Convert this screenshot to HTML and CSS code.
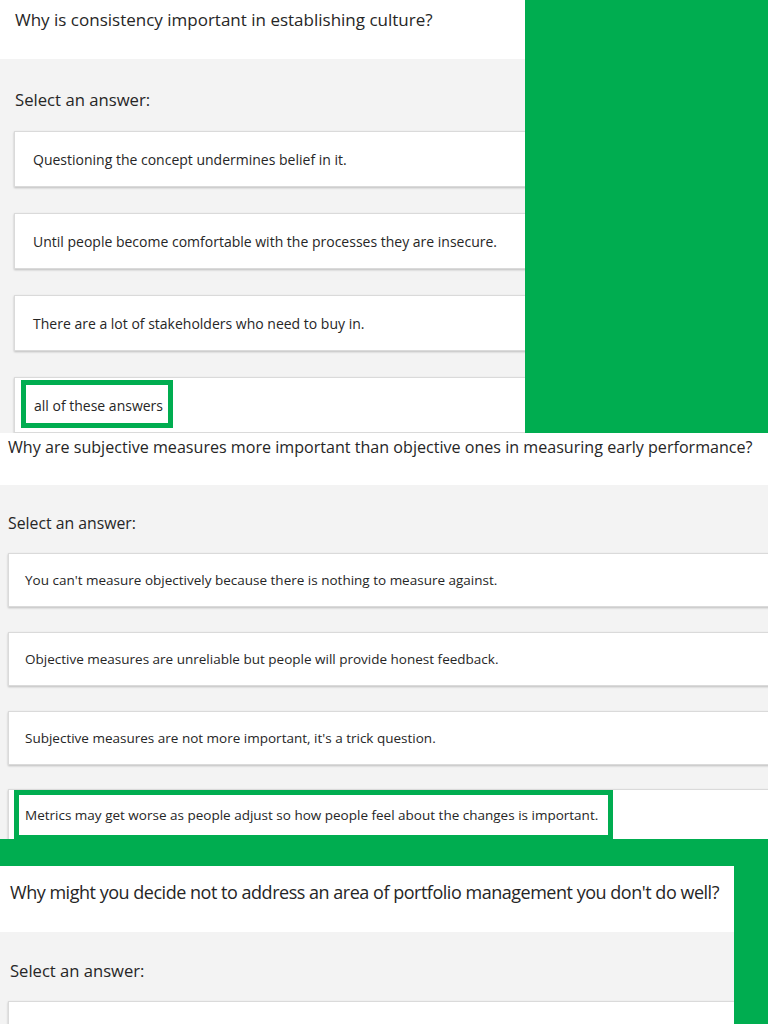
FILE: index.html
```html
<!DOCTYPE html>
<html lang="en">

<head>
    <meta charset="UTF-8">
    <meta name="viewport" content="width=device-width, initial-scale=1.0">
    <title>Quiz Answers</title>
    <link rel="stylesheet" href="styles.css">
</head>

<body>
    <div class="top-row">
        <section class="shot shot-one">
            <div class="question">Why is consistency important in establishing culture?</div>
            <div class="answers">
                <p class="prompt">Select an answer:</p>
                <div class="card">Questioning the concept undermines belief in it.</div>
                <div class="card">Until people become comfortable with the processes they are insecure.</div>
                <div class="card">There are a lot of stakeholders who need to buy in.</div>
                <div class="card marked"><span class="mark">all of these answers</span></div>
            </div>
        </section>
    </div>

    <section class="shot shot-two">
        <div class="question">Why are subjective measures more important than objective ones in measuring early performance?</div>
        <div class="answers">
            <p class="prompt">Select an answer:</p>
            <div class="card">You can't measure objectively because there is nothing to measure against.</div>
            <div class="card">Objective measures are unreliable but people will provide honest feedback.</div>
            <div class="card">Subjective measures are not more important, it's a trick question.</div>
            <div class="card marked"><span class="mark">Metrics may get worse as people adjust so how people feel about the changes is important.</span></div>
        </div>
    </section>

    <section class="shot shot-three">
        <div class="question">Why might you decide not to address an area of portfolio management you don't do well?</div>
        <div class="answers">
            <p class="prompt">Select an answer:</p>
            <div class="card"></div>
        </div>
    </section>
</body>

</html>
```

FILE: styles.css
```css
body {
    margin: 0;
    background-color: #00ad50;
    font-family: "Open Sans", "Liberation Sans", sans-serif;
    color: #262626;
    width: 768px;
    height: 1024px;
    overflow: hidden;
}

.shot {
    overflow: hidden;
    background-color: #f3f3f3;
}

.question {
    background-color: #fff;
    line-height: 24px;
    white-space: nowrap;
}

.answers {
    display: flex;
    flex-direction: column;
}

.prompt {
    margin: 0;
    line-height: 24px;
}

.card {
    display: flex;
    align-items: center;
    flex-shrink: 0;
    background-color: #fff;
    border: 1px solid #dadada;
    box-shadow: 0 1px 2px rgba(0, 0, 0, 0.22);
    box-sizing: border-box;
    white-space: nowrap;
}

.mark {
    display: flex;
    align-items: center;
    box-sizing: border-box;
    border: 5px solid #00ad50;
}

/* first screenshot */
.shot-one {
    width: 525px;
    height: 433px;
}

.shot-one .question {
    height: 59px;
    padding: 8px 15px 0;
    box-sizing: border-box;
    font-size: 17px;
}

.shot-one .answers {
    padding: 29px 0 0 14px;
    gap: 26px;
}

.shot-one .prompt {
    font-size: 16.7px;
    margin: 0 0 -7px 1px;
}

.shot-one .card {
    width: 560px;
    height: 56px;
    padding-left: 18px;
    font-size: 14px;
}

.shot-one .card.marked {
    align-items: flex-start;
    padding: 2px 0 0 6px;
}

.shot-one .mark {
    height: 48px;
    padding: 3px 5px 0 8px;
}

/* second screenshot */
.shot-two {
    width: 768px;
    height: 406px;
}

.shot-two .question {
    height: 52px;
    padding: 2px 8px 0;
    box-sizing: border-box;
    font-size: 16.1px;
}

.shot-two .answers {
    padding: 26px 0 0 8px;
    gap: 25px;
}

.shot-two .prompt {
    font-size: 15.8px;
    margin-bottom: -7px;
}

.shot-two .card {
    width: 780px;
    height: 54px;
    padding-left: 16px;
    font-size: 13.5px;
}

.shot-two .card.marked {
    align-items: flex-start;
    padding: 0 0 0 5px;
    margin-top: -1px;
}

.shot-two .mark {
    height: 50px;
    padding: 0 10px 0 6px;
}

/* third screenshot */
.shot-three {
    width: 734px;
    height: 158px;
    margin-top: 27px;
}

.shot-three .question {
    height: 66px;
    padding: 14px 10px 0;
    box-sizing: border-box;
    font-size: 18px;
    letter-spacing: -0.48px;
}

.shot-three .answers {
    padding: 27px 0 0 8px;
    gap: 18px;
}

.shot-three .prompt {
    font-size: 16.6px;
    padding-left: 2px;
}

.shot-three .card {
    width: 740px;
    height: 54px;
}
```
